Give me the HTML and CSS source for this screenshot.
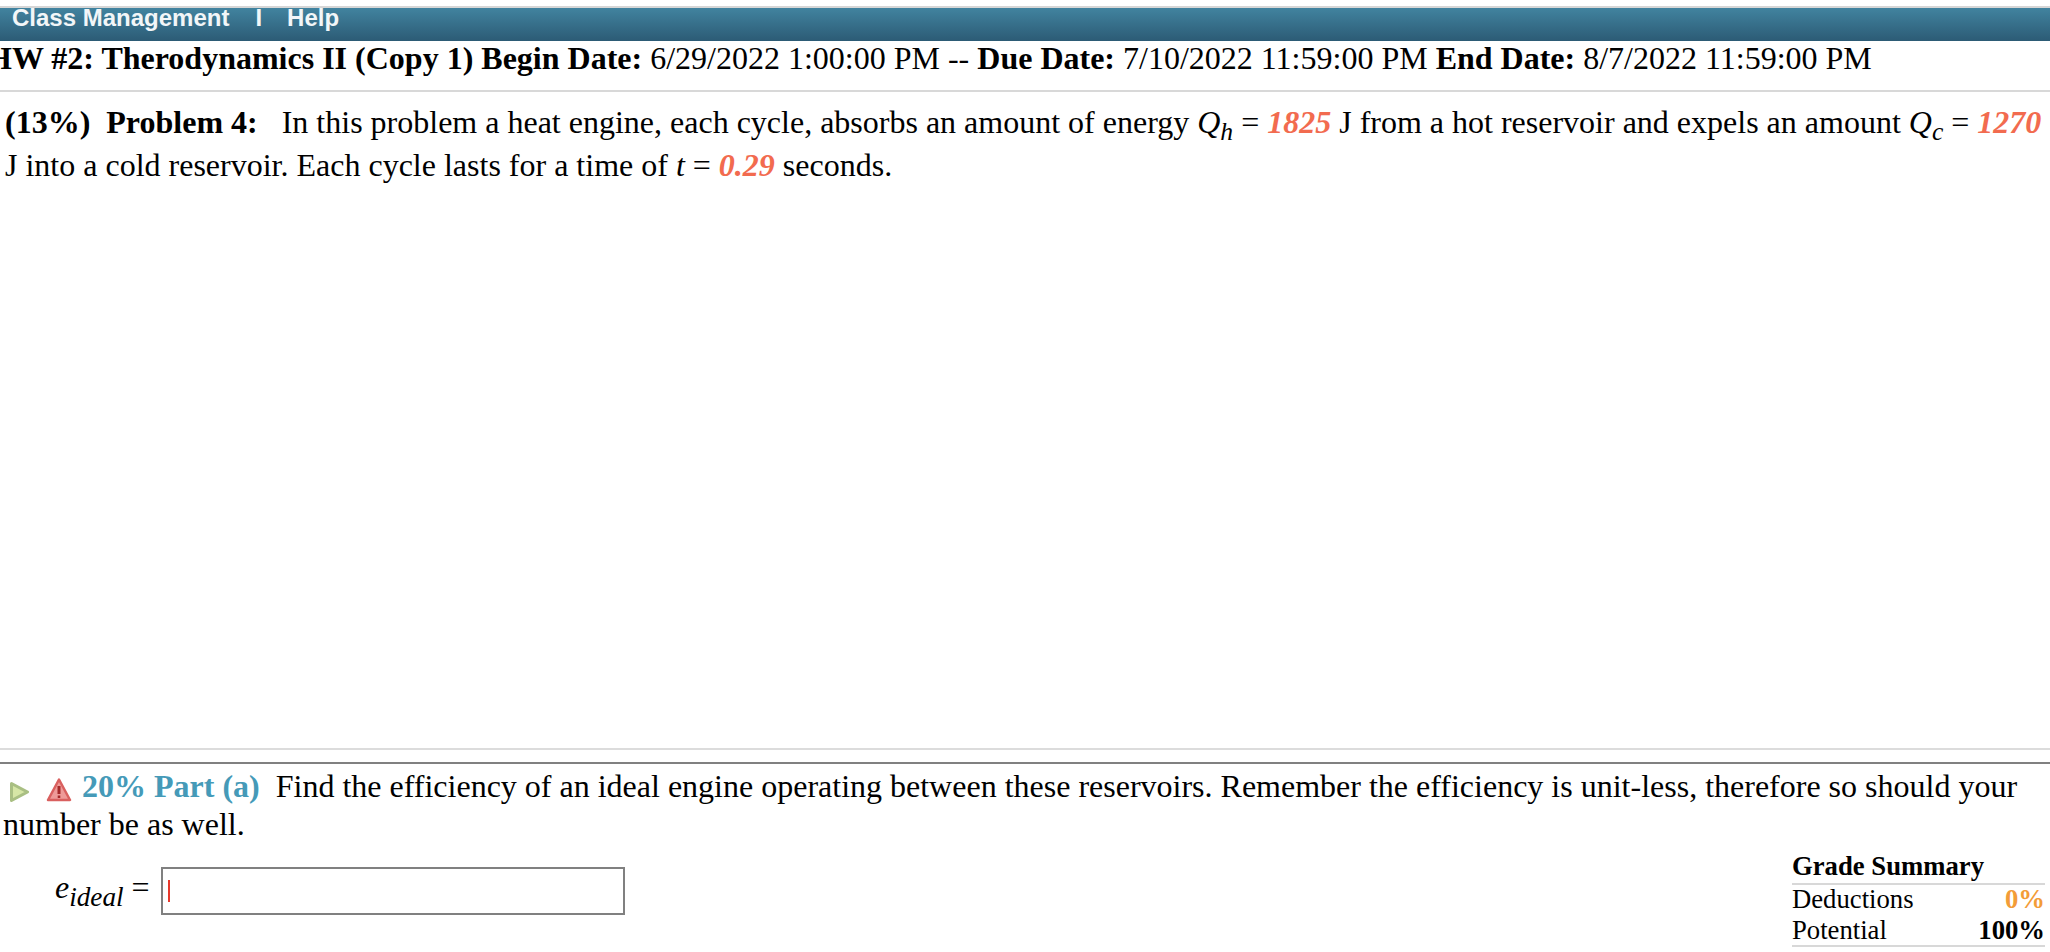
FILE: index.html
```html
<!DOCTYPE html>
<html lang="en">
<head>
<meta charset="utf-8">
<title>HW #2: Therodynamics II</title>
<link rel="stylesheet" href="styles.css">
</head>
<body>
<nav class="nav"><a class="nav-link">Class Management</a><span class="nav-sep">I</span><a class="nav-link">Help</a></nav>
<h1 class="title"><b>HW #2: Therodynamics II (Copy 1) Begin Date:</b> 6/29/2022 1:00:00 PM -- <b>Due Date:</b> 7/10/2022 11:59:00 PM <b>End Date:</b> 8/7/2022 11:59:00 PM</h1>
<section class="problem">
<p class="problem-text"><b>(13%)&nbsp; Problem 4:</b>&nbsp;&nbsp; In this problem a heat engine, each cycle, absorbs an amount of energy <i>Q<sub>h</sub></i> = <i class="given">1825</i> J from a hot reservoir and expels an amount <i>Q<sub>c</sub></i> = <i class="given">1270</i><br>J into a cold reservoir. Each cycle lasts for a time of <i>t</i> = <i class="given">0.29</i> seconds.</p>
</section>
<section class="part">
<p class="part-text"><svg class="ico ico-play" viewBox="0 0 21 22" aria-hidden="true"><path d="M2.5 2.5 L18.5 11 L2.5 19.5 Z" fill="#d6e6a6" stroke="#a9bf83" stroke-width="3" stroke-linejoin="round"/></svg><svg class="ico ico-warn" viewBox="0 0 26 26" aria-hidden="true"><path d="M13 2.5 L24 23 H2 Z" fill="#ee9a98" stroke="#d9605f" stroke-width="2.5" stroke-linejoin="round"/><path d="M13 9 V17" stroke="#a52a2a" stroke-width="3"/><path d="M13 18.5 V21" stroke="#a52a2a" stroke-width="2.6"/></svg><b class="part-label">20% Part (a)</b>&nbsp; Find the efficiency of an ideal engine operating between these reservoirs. Remember the efficiency is unit-less, therefore so should your<br>number be as well.</p>
<div class="answer-row">
<div class="answer">
<span class="var"><i>e<sub>ideal</sub></i> =</span>
<div class="input"><span class="caret"></span></div>
</div>
<table class="grade">
<thead><tr><th colspan="2">Grade Summary</th></tr></thead>
<tbody>
<tr class="row-ded"><td>Deductions</td><td class="pct ded">0%</td></tr>
<tr class="row-pot"><td>Potential</td><td class="pct pot">100%</td></tr>
</tbody>
</table>
</div>
</section>
</body>
</html>
```
FILE: styles.css
```css
html, body { margin: 0; padding: 0; background: #fff; color: #000; }
body { height: 952px; overflow: hidden; padding-top: 6px; box-sizing: border-box; font-family: "Liberation Serif", "Times New Roman", serif; font-size: 32px; }
.nav { height: 33px; border-top: 2px solid #d6d6d6; background: linear-gradient(#41839f, #2c5b75); display: flex; align-items: flex-start; font-family: "Liberation Sans", Arial, sans-serif; font-weight: bold; font-size: 24px; line-height: 19px; color: #f2f6f8; padding-left: 12px; }
.nav-sep { margin: 0 25px 0 26px; }
.title { margin: 0 0 0 -13px; height: 51px; box-sizing: border-box; border-bottom: 2px solid #d8d8d8; font-size: 32px; font-weight: normal; line-height: 35px; white-space: nowrap; }
.problem { height: 658px; box-sizing: border-box; border-bottom: 2px solid #dcdcdc; padding: 9px 0 0 5px; }
.problem-text { margin: 0; line-height: 43px; font-size: 32px; white-space: nowrap; }
.problem-text sub { font-size: 0.8em; line-height: 0; }
.given { color: #f26b4f; font-weight: bold; }
.part { margin-top: 12px; border-top: 2px solid #808080; }
.part-text { margin: 0; padding: 3px 0 0 3px; line-height: 38px; font-size: 32px; white-space: nowrap; }
.ico { display: inline-block; vertical-align: -6px; filter: blur(0.4px); }
.ico-play { width: 21px; height: 22px; margin: 0 16px 0 6px; }
.ico-warn { width: 26px; height: 26px; margin-right: 10px; }
.part-label { color: #459ab8; }
.answer-row { display: flex; justify-content: space-between; align-items: flex-start; }
.answer { display: flex; align-items: flex-start; margin-top: 24px; padding-left: 55px; }
.var { font-size: 32px; line-height: 36px; width: 106px; margin-top: 2px; white-space: nowrap; }
.var sub { font-size: 0.85em; line-height: 0; vertical-align: -8px; }
.input { width: 464px; height: 48px; box-sizing: border-box; border: 2px solid #808080; display: flex; align-items: center; padding-left: 5px; }
.caret { width: 2px; height: 22px; background: #e8392c; }
.grade { width: 253px; border-collapse: collapse; font-size: 26.7px; margin: 10px 5px 0 0; }
.grade th { text-align: left; padding: 0 0 4px; border-bottom: 2px solid #d8d8d8; line-height: 26px; }
.grade td { padding: 0; line-height: 28px; vertical-align: top; }
.row-ded td { height: 31px; }
.row-pot td { height: 29px; border-bottom: 2px solid #d8d8d8; }
.pct { text-align: right; font-weight: bold; }
.ded { color: #f39c38; }
```
